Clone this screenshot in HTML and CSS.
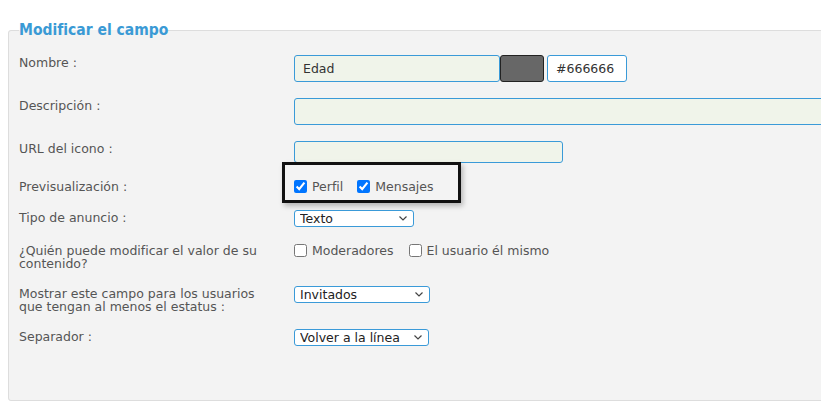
FILE: index.html
```html
<!DOCTYPE html>
<html lang="es">
<head>
<meta charset="utf-8">
<title>Modificar el campo</title>
<link rel="stylesheet" href="styles.css">
</head>
<body>
<fieldset class="panel">
  <legend class="panel-title">Modificar el campo</legend>

  <div class="row row-name">
    <label class="lbl">Nombre :</label>
    <div class="ctl">
      <input class="txt txt-name" type="text" value="Edad">
      <span class="swatch"></span>
      <input class="txt txt-hex" type="text" value="#666666">
    </div>
  </div>

  <div class="row row-desc">
    <label class="lbl">Descripción :</label>
    <div class="ctl">
      <input class="txt txt-desc" type="text" value="">
    </div>
  </div>

  <div class="row row-url">
    <label class="lbl">URL del icono :</label>
    <div class="ctl">
      <input class="txt txt-url" type="text" value="">
    </div>
  </div>

  <div class="row row-prev">
    <label class="lbl">Previsualización :</label>
    <div class="ctl ctl-hl">
      <span class="hl-box"></span>
      <label class="chk"><input type="checkbox" checked> Perfil</label>
      <label class="chk"><input type="checkbox" checked> Mensajes</label>
    </div>
  </div>

  <div class="row row-tipo">
    <label class="lbl">Tipo de anuncio :</label>
    <div class="ctl">
      <span class="sel-wrap sel-tipo">
        <select class="sel"><option>Texto</option></select>
        <svg class="chev" width="8" height="5" viewBox="0 0 8 5"><path d="M0.5 0.5 L4 4 L7.5 0.5" fill="none" stroke="#444" stroke-width="1.2"/></svg>
      </span>
    </div>
  </div>

  <div class="row row-quien">
    <label class="lbl">¿Quién puede modificar el valor de su contenido?</label>
    <div class="ctl">
      <label class="chk"><input type="checkbox"> Moderadores</label>
      <label class="chk"><input type="checkbox"> El usuario él mismo</label>
    </div>
  </div>

  <div class="row row-mostrar">
    <label class="lbl">Mostrar este campo para los usuarios que tengan al menos el estatus :</label>
    <div class="ctl">
      <span class="sel-wrap sel-mostrar">
        <select class="sel"><option>Invitados</option></select>
        <svg class="chev" width="8" height="5" viewBox="0 0 8 5"><path d="M0.5 0.5 L4 4 L7.5 0.5" fill="none" stroke="#444" stroke-width="1.2"/></svg>
      </span>
    </div>
  </div>

  <div class="row row-sep">
    <label class="lbl">Separador :</label>
    <div class="ctl">
      <span class="sel-wrap sel-sep">
        <select class="sel"><option>Volver a la línea</option></select>
        <svg class="chev" width="8" height="5" viewBox="0 0 8 5"><path d="M0.5 0.5 L4 4 L7.5 0.5" fill="none" stroke="#444" stroke-width="1.2"/></svg>
      </span>
    </div>
  </div>
</fieldset>
</body>
</html>
```
FILE: styles.css
```css
html, body {
  margin: 0;
  padding: 0;
  overflow: hidden;
  background: #ffffff;
}
body {
  padding: 21px 0 0 8px;
  font-family: "DejaVu Sans", Verdana, sans-serif;
  font-size: 12.5px;
  color: #555555;
  width: 1100px;
}
.panel {
  margin: 0;
  width: 1000px;
  box-sizing: border-box;
  background: #f3f3f3;
  border: 1px solid #dddddd;
  border-radius: 3px 0 0 3px;
  padding: 16px 0 54px 10px;
}
.panel-title {
  padding: 0;
  margin: 0;
  font-family: "DejaVu Sans Condensed", "DejaVu Sans", sans-serif;
  font-size: 15.5px;
  font-weight: bold;
  color: #3a9ad5;
  line-height: 18px;
}
.row {
  display: grid;
  grid-template-columns: 275px 1fr;
  margin-bottom: 16px;
}
.lbl {
  line-height: 13px;
  padding-top: 1px;
  padding-right: 20px;
}
.ctl {
  display: flex;
  align-items: flex-start;
}
.txt {
  box-sizing: border-box;
  height: 27px;
  border: 1px solid #3a9ad8;
  border-radius: 3px;
  background: #f0f4ea;
  font-family: "DejaVu Sans", Verdana, sans-serif;
  font-size: 12.5px;
  color: #333333;
  padding: 0 8px;
  margin: 0;
  outline: none;
}
.txt-name { width: 206px; }
.swatch {
  box-sizing: border-box;
  width: 44px;
  height: 27px;
  background: #676767;
  border: 1px solid #222222;
  border-radius: 3px;
  margin: 0 3px 0 0;
}
.txt-hex {
  width: 80px;
  background: #ffffff;
}
.txt-desc { width: 600px; }
.txt-url { width: 269px; height: 22px; }

.ctl-hl { position: relative; }
.hl-box {
  position: absolute;
  left: -12px;
  top: -17px;
  width: 179px;
  height: 41px;
  box-sizing: border-box;
  border: 3px solid #111111;
  box-shadow: 2px 3px 5px rgba(0,0,0,0.25);
  pointer-events: none;
}
.chk {
  display: inline-flex;
  align-items: center;
  margin-right: 14px;
  line-height: 15px;
}
.chk input {
  width: 13px;
  height: 13px;
  margin: 0 5px 0 0;
}
.row-quien .chk { margin-right: 15px; }

.sel-wrap {
  position: relative;
  display: inline-block;
  height: 17px;
}
.sel {
  -webkit-appearance: none;
  appearance: none;
  box-sizing: border-box;
  width: 100%;
  height: 17px;
  border: 1px solid #3a9ad8;
  border-radius: 3px;
  background: #ffffff;
  font-family: "DejaVu Sans", Verdana, sans-serif;
  font-size: 12.5px;
  line-height: 15px;
  color: #222222;
  padding: 0 0 0 5px;
  margin: 0;
  outline: none;
}
.chev {
  position: absolute;
  right: 7px;
  top: 6px;
  pointer-events: none;
}
.sel-tipo { width: 120px; }
.sel-mostrar { width: 136px; }
.sel-sep { width: 135px; }
.row-sep { margin-bottom: 0; }
```
